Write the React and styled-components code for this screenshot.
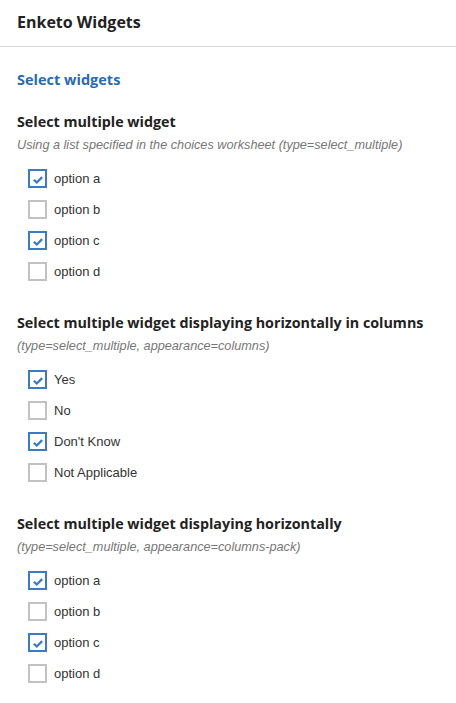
import React from "react";
import styled, { createGlobalStyle } from "styled-components";

const GlobalStyle = createGlobalStyle`
  html, body {
    margin: 0;
    padding: 0;
    background: #fff;
  }
  body {
    font-family: "Liberation Sans", Arial, sans-serif;
    color: #333;
  }
`;

const Page = styled.div`
  width: 100%;
  min-height: 703px;
  background: #fff;
`;

const Header = styled.header`
  height: 47px;
  padding: 0 17px 3px;
  box-sizing: border-box;
  display: flex;
  align-items: center;
  border-bottom: 1px solid #d9d9d9;
`;

const Title = styled.h1`
  margin: 0;
  font-family: "Open Sans", "Noto Sans", sans-serif;
  font-size: 16px;
  font-weight: 700;
  color: #222;
`;

const Main = styled.main`
  padding: 23px 17px 0;
`;

const GroupLabel = styled.h2`
  margin: 0;
  font-family: "Open Sans", "Noto Sans", sans-serif;
  font-size: 14.5px;
  line-height: 20px;
  font-weight: 700;
  color: #2a6ab3;
`;

const Question = styled.fieldset`
  border: 0;
  margin: ${(p) => (p.first ? "22px" : "26px")} 0 0;
  padding: 0;
  min-width: 0;
`;

const QuestionTitle = styled.legend`
  padding: 0;
  font-family: "Open Sans", "Noto Sans", sans-serif;
  font-size: 14.3px;
  line-height: 20px;
  font-weight: 700;
  color: #222;
`;

const Hint = styled.div`
  margin-top: 4px;
  font-size: 12.7px;
  line-height: 18px;
  font-style: italic;
  color: #777;
`;

const Options = styled.div`
  padding: 9px 0 0 11px;
  display: flex;
  flex-direction: column;
`;

const Option = styled.label`
  height: 31px;
  display: flex;
  align-items: center;
  gap: 7px;
  font-size: 13px;
  color: #333;
`;

const Box = styled.span`
  width: 19px;
  height: 19px;
  box-sizing: border-box;
  border: 2px solid ${(p) => (p.checked ? "#3b7bc4" : "#c2c2c2")};
  display: flex;
  align-items: center;
  justify-content: center;
  padding-top: 2px;
  background: #fff;
`;

const Check = () => (
  <svg width="10" height="8" viewBox="0 0 10 8">
    <path
      d="M0 4.6 L1.7 3 L3.8 5 L8.3 0.3 L10 1.9 L3.8 8 Z"
      fill="#3b7bc4"
    />
  </svg>
);

const questions = [
  {
    title: "Select multiple widget",
    hint: "Using a list specified in the choices worksheet (type=select_multiple)",
    options: [
      ["option a", true],
      ["option b", false],
      ["option c", true],
      ["option d", false],
    ],
  },
  {
    title: "Select multiple widget displaying horizontally in columns",
    hint: "(type=select_multiple, appearance=columns)",
    options: [
      ["Yes", true],
      ["No", false],
      ["Don't Know", true],
      ["Not Applicable", false],
    ],
  },
  {
    title: "Select multiple widget displaying horizontally",
    hint: "(type=select_multiple, appearance=columns-pack)",
    options: [
      ["option a", true],
      ["option b", false],
      ["option c", true],
      ["option d", false],
    ],
  },
];

export default function App() {
  return (
    <Page>
      <GlobalStyle />
      <Header>
        <Title>Enketo Widgets</Title>
      </Header>
      <Main>
        <GroupLabel>Select widgets</GroupLabel>
        {questions.map((q, i) => (
          <Question key={i} first={i === 0}>
            <QuestionTitle>{q.title}</QuestionTitle>
            <Hint>{q.hint}</Hint>
            <Options>
              {q.options.map(([label, checked]) => (
                <Option key={label}>
                  <Box checked={checked}>{checked && <Check />}</Box>
                  {label}
                </Option>
              ))}
            </Options>
          </Question>
        ))}
      </Main>
    </Page>
  );
}
